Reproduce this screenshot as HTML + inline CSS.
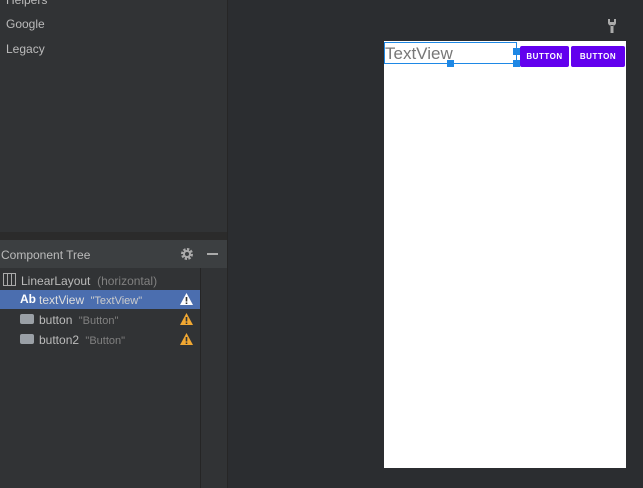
<!DOCTYPE html><html><head><style>
body{margin:0;width:643px;height:488px;background:#2b2d30;position:relative;overflow:hidden;font-family:"Liberation Sans",sans-serif;font-size:12px;color:#bbb}
div{position:absolute;box-sizing:border-box}
.t{white-space:nowrap}
.g{color:#808080}
</style></head><body>
<div style="left:0;top:0;width:227px;height:232px;background:#313335"></div>
<div class="t" style="left:6px;top:-7px">Helpers</div>
<div class="t" style="left:6px;top:17px">Google</div>
<div class="t" style="left:6px;top:42px">Legacy</div>
<div style="left:0;top:232px;width:227px;height:8px;background:#2b2b2b"></div>
<div style="left:0;top:240px;width:227px;height:28px;background:#3c3f41"></div>
<div class="t" style="left:1px;top:248px">Component Tree</div>
<svg style="position:absolute;left:180px;top:247px" width="14" height="14" viewBox="0 0 14 14"><circle cx="7" cy="7" r="4.5" fill="none" stroke="#aaa" stroke-width="3" stroke-dasharray="2.2 1.3"/><circle cx="7" cy="7" r="3" fill="none" stroke="#aaa" stroke-width="2"/></svg>
<div style="left:207px;top:253px;width:11px;height:2px;background:#aaa"></div>
<div style="left:0;top:268px;width:227px;height:220px;background:#313335"></div>
<div style="left:200px;top:268px;width:1px;height:220px;background:#252525"></div>
<div style="left:227px;top:0;width:1px;height:488px;background:#262626"></div>
<div style="left:3px;top:273px;width:13px;height:13px;border:1px solid #aaa"></div>
<div style="left:7px;top:273px;width:1px;height:13px;background:#aaa"></div>
<div style="left:11px;top:273px;width:1px;height:13px;background:#aaa"></div>
<div class="t" style="left:21px;top:274px">LinearLayout <span class="g">&nbsp;(horizontal)</span></div>
<div style="left:0;top:290px;width:200px;height:19px;background:#4b6eaf"></div>
<div class="t" style="left:20px;top:292px;color:#fff;font-weight:bold">Ab</div>
<div class="t" style="left:39px;top:293px;color:#ddd">textView <span style="color:#ccc;font-size:11px">&nbsp;"TextView"</span></div>
<div style="left:20px;top:314px;width:14px;height:10px;background:#9aa0a6;border-radius:2px"></div>
<div class="t" style="left:39px;top:313px">button <span class="g" style="font-size:11px">&nbsp;"Button"</span></div>
<div style="left:20px;top:334px;width:14px;height:10px;background:#9aa0a6;border-radius:2px"></div>
<div class="t" style="left:39px;top:333px">button2 <span class="g" style="font-size:11px">&nbsp;"Button"</span></div>
<svg style="position:absolute;left:179px;top:292px" width="15" height="54" viewBox="0 0 15 54"><path d="M7.5 1L14 13H1Z" fill="#fff"/><path d="M7.5 21L14 33H1Z" fill="#f0a732"/><path d="M7.5 41L14 53H1Z" fill="#f0a732"/><g fill="#313335"><rect x="6.7" y="5" width="1.6" height="4.5"/><rect x="6.7" y="10.5" width="1.6" height="1.5"/><rect x="6.7" y="25" width="1.6" height="4.5"/><rect x="6.7" y="30.5" width="1.6" height="1.5"/><rect x="6.7" y="45" width="1.6" height="4.5"/><rect x="6.7" y="50.5" width="1.6" height="1.5"/></g></svg>
<svg style="position:absolute;left:607px;top:18px" width="10" height="15" viewBox="0 0 10 15"><path d="M1 1v4a4 3 0 0 0 8 0V1H7v3H3V1Z M3.5 7h3v8h-3Z" fill="#aaa"/></svg>
<div style="left:384px;top:41px;width:242px;height:427px;background:#fff"></div>
<div class="t" style="left:385px;top:44px;font-size:17px;color:#777">TextView</div>
<div style="left:384px;top:42px;width:133px;height:22px;border:1px solid #1e88e5;border-bottom:none"></div>
<div style="left:384px;top:63px;width:133px;height:1px;background:#1e88e5"></div>
<div style="left:447px;top:60px;width:7px;height:7px;background:#1e88e5"></div>
<div style="left:513px;top:48px;width:7px;height:7px;background:#1e88e5"></div>
<div style="left:513px;top:60px;width:7px;height:7px;background:#1e88e5"></div>
<div style="left:520px;top:46px;width:49px;height:21px;background:#6200ee;border-radius:2px;color:#fff;font-size:8px;text-align:center;line-height:21px;font-weight:bold;letter-spacing:.5px">BUTTON</div>
<div style="left:571px;top:46px;width:54px;height:21px;background:#6200ee;border-radius:2px;color:#fff;font-size:8px;text-align:center;line-height:21px;font-weight:bold;letter-spacing:.5px">BUTTON</div>
</body></html>
